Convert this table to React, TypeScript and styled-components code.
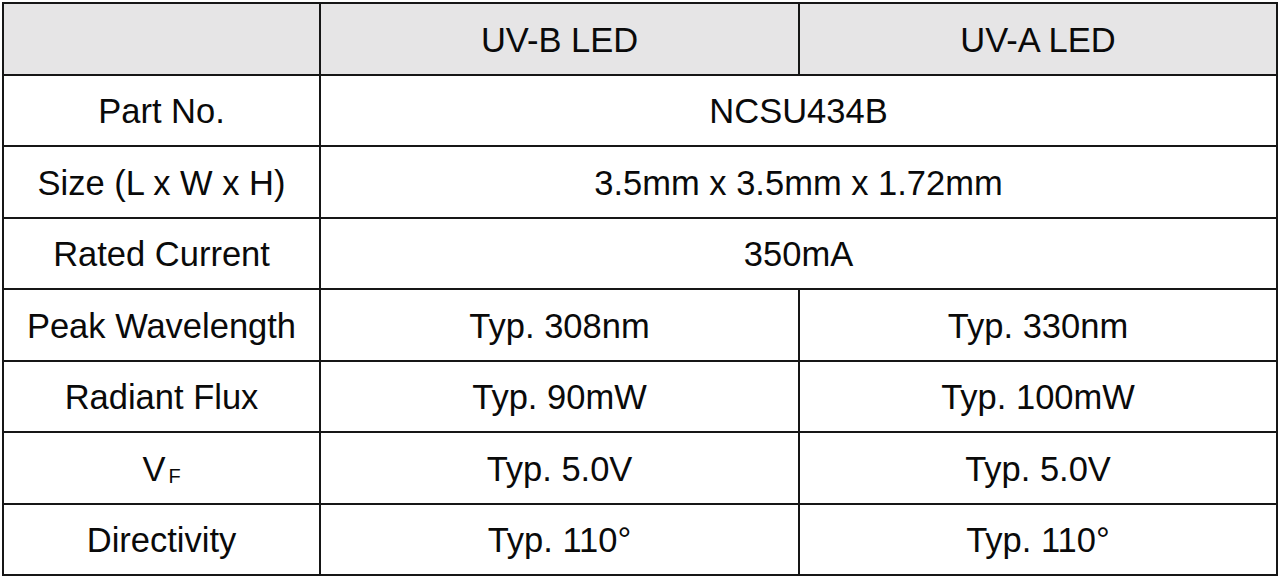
import React from "react";
import { createGlobalStyle, styled } from "styled-components";

const GlobalStyle = createGlobalStyle`
  html, body {
    margin: 0;
    padding: 0;
    background: #ffffff;
  }
  body {
    font-family: "Liberation Sans", Arial, sans-serif;
    color: #0a0a0a;
  }
`;

const Page = styled.div`
  padding: 2px 0 0 2px;
`;

const SpecTable = styled.table`
  width: 1276px;
  table-layout: fixed;
  border-collapse: collapse;
  border: 2px solid #161616;
`;

const Row = styled.tr`
  height: 71.5px;
`;

const Cell = styled.td<{ $head?: boolean; $thin?: boolean }>`
  border: 2px solid #161616;
  ${(p) => (p.$thin ? "border-left: 1px solid #333333;" : "")}
  background: ${(p) => (p.$head ? "#e6e5e6" : "#ffffff")};
  text-align: center;
  vertical-align: middle;
  font-size: 34.5px;
  line-height: 1;
  padding: 0;
  padding-top: 2px;
`;

const Sub = styled.span`
  font-size: 20px;
  position: relative;
  top: 2px;
  margin-left: 3px;
`;

type Spec = { label: React.ReactNode; a: string; b?: string };

const specs: Spec[] = [
  { label: "Part No.", a: "NCSU434B" },
  { label: "Size (L x W x H)", a: "3.5mm x 3.5mm x 1.72mm" },
  { label: "Rated Current", a: "350mA" },
  { label: "Peak Wavelength", a: "Typ. 308nm", b: "Typ. 330nm" },
  { label: "Radiant Flux", a: "Typ. 90mW", b: "Typ. 100mW" },
  {
    label: (
      <>
        V<Sub>F</Sub>
      </>
    ),
    a: "Typ. 5.0V",
    b: "Typ. 5.0V",
  },
  { label: "Directivity", a: "Typ. 110°", b: "Typ. 110°" },
];

export default function App() {
  return (
    <Page>
      <GlobalStyle />
      <SpecTable>
        <colgroup>
          <col style={{ width: 317 }} />
          <col style={{ width: 479 }} />
          <col style={{ width: 478 }} />
        </colgroup>
        <tbody>
          <Row>
            <Cell $head />
            <Cell $head>UV-B LED</Cell>
            <Cell $head $thin>UV-A LED</Cell>
          </Row>
          {specs.map((s, i) => (
            <Row key={i}>
              <Cell>{s.label}</Cell>
              {s.b ? (
                <>
                  <Cell>{s.a}</Cell>
                  <Cell>{s.b}</Cell>
                </>
              ) : (
                <Cell colSpan={2}>{s.a}</Cell>
              )}
            </Row>
          ))}
        </tbody>
      </SpecTable>
    </Page>
  );
}
